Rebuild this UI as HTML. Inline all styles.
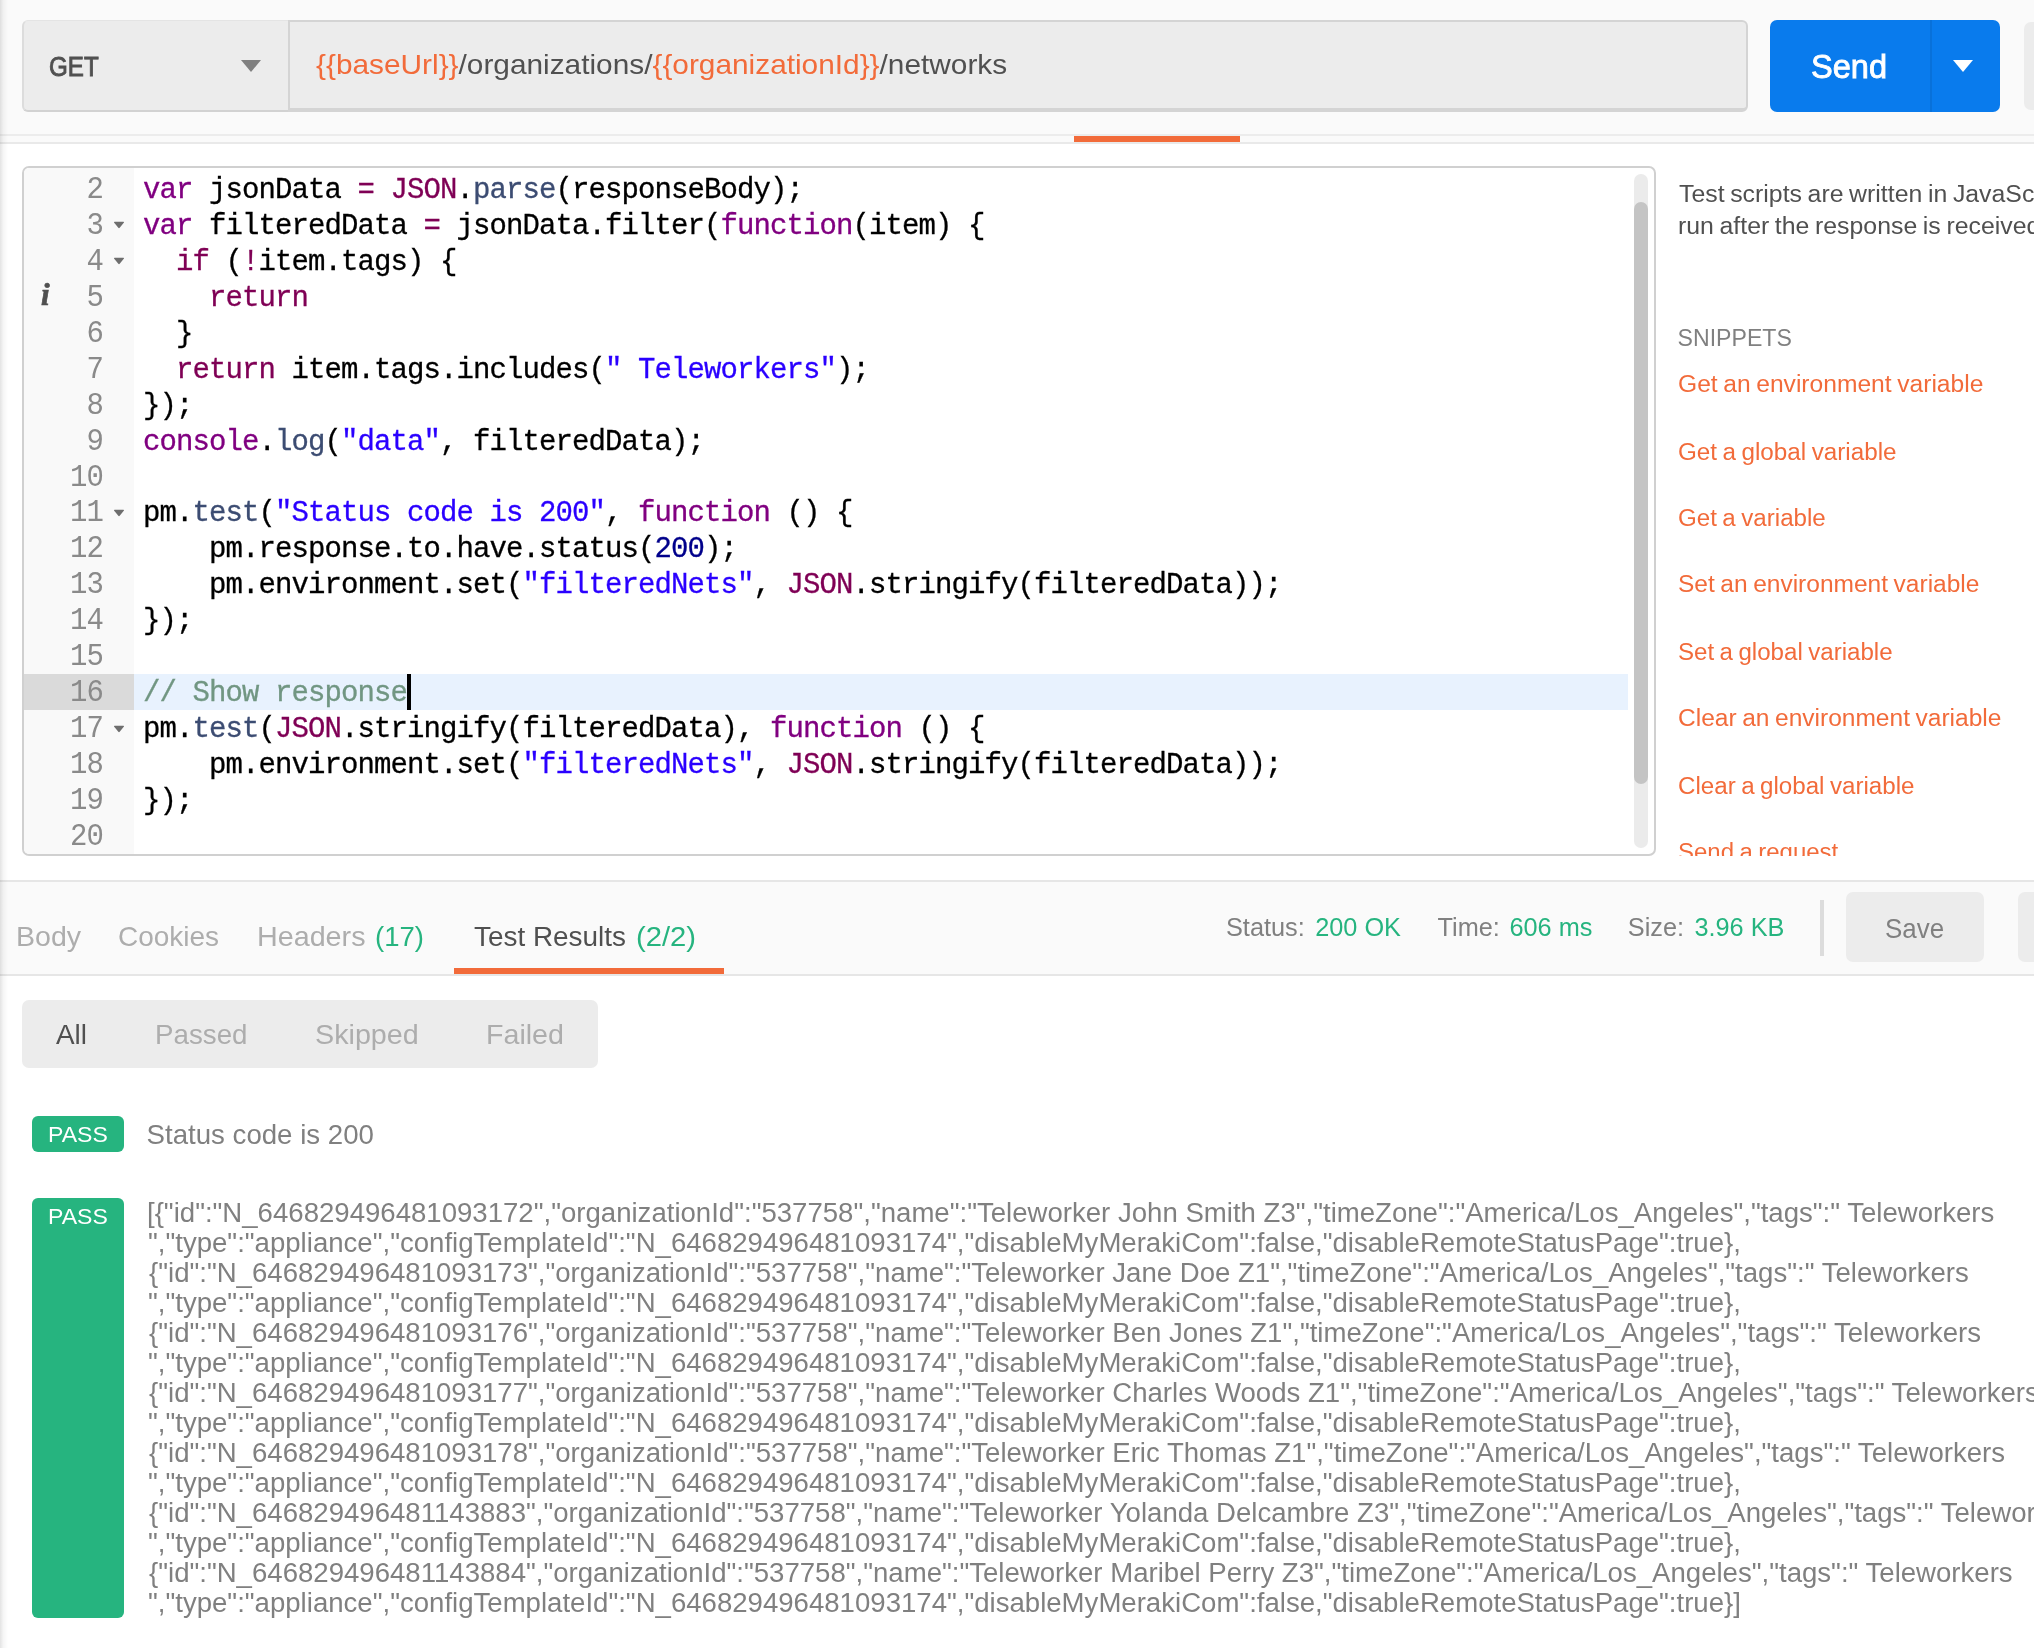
<!DOCTYPE html>
<html>
<head>
<meta charset="utf-8">
<title>Postman</title>
<style>
html,body{margin:0;padding:0;}
body{width:2034px;height:1648px;overflow:hidden;background:#fff;position:relative;font-family:"Liberation Sans",sans-serif;}
#app{position:absolute;left:0;top:0;width:2034px;height:1648px;overflow:hidden;will-change:transform;background:#fff;}
.abs{position:absolute;}
.t{position:absolute;white-space:pre;line-height:1;}
.mono{font-family:"Liberation Mono",monospace;}
#topbg{left:0;top:0;width:2034px;height:143px;background:#fafafa;}
#line1{left:0;top:134px;width:2034px;height:2px;background:#ececec;}
#line2{left:0;top:142px;width:2034px;height:2px;background:#e9e9e9;}
#tabbar{left:1074px;top:136px;width:166px;height:6px;background:#f26b3a;}
#getbox{left:22px;top:20px;width:268px;height:92px;background:#ececec;border-radius:6px 0 0 6px;box-sizing:border-box;border-left:2px solid #dcdcdc;border-bottom:2px solid #d2d2d2;border-top:1px solid #e4e4e4;}
#urlbox{left:288px;top:20px;width:1460px;height:92px;background:#ececec;border-radius:0 6px 6px 0;box-sizing:border-box;border:2px solid #d4d4d4;border-bottom:4px solid #d4d4d4;}
#gettri{left:241px;top:60px;width:0;height:0;border-left:10px solid transparent;border-right:10px solid transparent;border-top:12px solid #808080;}
#sendbtn{left:1770px;top:20px;width:230px;height:92px;background:#097bed;border-radius:7px;}
#senddiv{left:1930px;top:20px;width:2px;height:92px;background:#0871da;}
#sendtri{left:1953px;top:60px;width:0;height:0;border-left:10px solid transparent;border-right:10px solid transparent;border-top:12px solid #fff;}
#morebtn{left:2024px;top:22px;width:30px;height:88px;background:#ececec;border-radius:7px;}
#lshadow{left:0;top:0;width:8px;height:1648px;background:linear-gradient(to right,rgba(0,0,0,0.11),rgba(0,0,0,0.04) 40%,rgba(0,0,0,0) 100%);}
#rpcover{left:1660px;top:856px;width:374px;height:24px;background:#fff;}
#respbg{left:0;top:882px;width:2034px;height:92px;background:#fafafa;}
#respl1{left:0;top:880px;width:2034px;height:2px;background:#e6e6e6;}
#respl2{left:0;top:974px;width:2034px;height:2px;background:#e6e6e6;}
#tabul{left:454px;top:968px;width:270px;height:6px;background:#f26b3a;}
#savebtn{left:1846px;top:892px;width:138px;height:70px;background:#ececec;border-radius:7px;}
#dlbtn{left:2018px;top:892px;width:40px;height:70px;background:#ececec;border-radius:7px;}
#vsep{left:1820px;top:900px;width:4px;height:56px;background:#dcdcdc;}
#filt{left:22px;top:1000px;width:576px;height:68px;background:#ececec;border-radius:7px;}
#pass1{left:32px;top:1116px;width:92px;height:36px;background:#26b47f;border-radius:6px;}
#pass2{left:32px;top:1198px;width:92px;height:420px;background:#26b47f;border-radius:6px;}
.o{color:#f26b3a;}

#edbox{left:22px;top:166px;width:1634px;height:690px;box-sizing:border-box;border:2px solid #d0d0d0;border-radius:7px;background:#fff;}
#gutter{left:24px;top:168px;width:110px;height:686px;background:#f9f9f9;border-radius:5px 0 0 5px;}
#actg{left:24px;width:110px;height:36px;background:#dadada;}
#actl{left:134px;width:1494px;height:36px;background:#e8f2fe;}
#cursor{left:407px;width:4px;height:36px;background:#000;}
#sbtrack{left:1634px;top:174px;width:14px;height:674px;background:#ebebeb;border-radius:7px;}
#sbthumb{left:1634px;top:202px;width:14px;height:582px;background:#c4c4c4;border-radius:7px;}
.ln{right:1931px;font-size:29.0px;color:#8a8a8a;letter-spacing:-0.9028px;transform:scaleY(1.1);transform-origin:100% 76.65%;}
.cl{left:143.0px;font-size:29.0px;color:#000;letter-spacing:-0.9028px;-webkit-text-stroke:0.3px;}
.k{color:#7f0055;} .p{color:#800080;} .f{color:#3c4c72;} .s{color:#2a00ff;} .n{color:#00008b;} .c{color:#719682;}
#info{font-family:"Liberation Serif",serif;font-weight:bold;font-style:italic;font-size:31px;color:#505050;-webkit-text-stroke:0.7px #505050;}
</style>
</head>
<body>
<div id="app">
<div id="topbg" class="abs"></div>
<div id="line1" class="abs"></div>
<div id="line2" class="abs"></div>
<div id="tabbar" class="abs"></div>
<div id="getbox" class="abs"></div>
<div id="urlbox" class="abs"></div>
<div id="gettri" class="abs"></div>
<div id="sendbtn" class="abs"></div>
<div id="senddiv" class="abs"></div>
<div id="sendtri" class="abs"></div>
<div id="morebtn" class="abs"></div>
<div id="edbox" class="abs"></div>
<div id="gutter" class="abs"></div>
<div id="actg" class="abs" style="top:674px"></div>
<div id="actl" class="abs" style="top:674px"></div>
<div id="cursor" class="abs" style="top:674px"></div>
<div id="sbtrack" class="abs"></div><div id="sbthumb" class="abs"></div>
<span class="t mono ln" style="top:175.67px">2</span>
<span class="t mono cl" style="top:175.67px"><span class="p">var</span> jsonData <span class="k">=</span> <span class="k">JSON</span>.<span class="f">parse</span>(responseBody);</span>
<span class="t mono ln" style="top:211.65px">3</span>
<svg class="abs" style="left:113px;top:221px" width="12" height="8" viewBox="0 0 12 8"><path d="M1.6 0.8 H10.4 Q11.4 0.9 10.8 1.8 L6.7 6.8 Q6 7.5 5.3 6.8 L1.2 1.8 Q0.6 0.9 1.6 0.8 Z" fill="#6e6e6e"/></svg>
<span class="t mono cl" style="top:211.65px"><span class="p">var</span> filteredData <span class="k">=</span> jsonData.filter(<span class="p">function</span>(item) {</span>
<span class="t mono ln" style="top:247.63px">4</span>
<svg class="abs" style="left:113px;top:257px" width="12" height="8" viewBox="0 0 12 8"><path d="M1.6 0.8 H10.4 Q11.4 0.9 10.8 1.8 L6.7 6.8 Q6 7.5 5.3 6.8 L1.2 1.8 Q0.6 0.9 1.6 0.8 Z" fill="#6e6e6e"/></svg>
<span class="t mono cl" style="top:247.63px">  <span class="k">if</span> (<span class="k">!</span>item.tags) {</span>
<span class="t mono ln" style="top:283.61px">5</span>
<span class="t mono cl" style="top:283.61px">    <span class="k">return</span></span>
<span class="t mono ln" style="top:319.59px">6</span>
<span class="t mono cl" style="top:319.59px">  }</span>
<span class="t mono ln" style="top:355.57px">7</span>
<span class="t mono cl" style="top:355.57px">  <span class="k">return</span> item.tags.includes(<span class="s">" Teleworkers"</span>);</span>
<span class="t mono ln" style="top:391.55px">8</span>
<span class="t mono cl" style="top:391.55px">});</span>
<span class="t mono ln" style="top:427.53px">9</span>
<span class="t mono cl" style="top:427.53px"><span class="p">console</span>.<span class="f">log</span>(<span class="s">"data"</span>, filteredData);</span>
<span class="t mono ln" style="top:463.51px">10</span>
<span class="t mono ln" style="top:499.49px">11</span>
<svg class="abs" style="left:113px;top:509px" width="12" height="8" viewBox="0 0 12 8"><path d="M1.6 0.8 H10.4 Q11.4 0.9 10.8 1.8 L6.7 6.8 Q6 7.5 5.3 6.8 L1.2 1.8 Q0.6 0.9 1.6 0.8 Z" fill="#6e6e6e"/></svg>
<span class="t mono cl" style="top:499.49px">pm.<span class="f">test</span>(<span class="s">"Status code is 200"</span>, <span class="p">function</span> () {</span>
<span class="t mono ln" style="top:535.47px">12</span>
<span class="t mono cl" style="top:535.47px">    pm.response.to.have.status(<span class="n">200</span>);</span>
<span class="t mono ln" style="top:571.45px">13</span>
<span class="t mono cl" style="top:571.45px">    pm.environment.set(<span class="s">"filteredNets"</span>, <span class="k">JSON</span>.stringify(filteredData));</span>
<span class="t mono ln" style="top:607.43px">14</span>
<span class="t mono cl" style="top:607.43px">});</span>
<span class="t mono ln" style="top:643.41px">15</span>
<span class="t mono ln" style="top:679.39px">16</span>
<span class="t mono cl" style="top:679.39px"><span class="c">// Show response</span></span>
<span class="t mono ln" style="top:715.37px">17</span>
<svg class="abs" style="left:113px;top:725px" width="12" height="8" viewBox="0 0 12 8"><path d="M1.6 0.8 H10.4 Q11.4 0.9 10.8 1.8 L6.7 6.8 Q6 7.5 5.3 6.8 L1.2 1.8 Q0.6 0.9 1.6 0.8 Z" fill="#6e6e6e"/></svg>
<span class="t mono cl" style="top:715.37px">pm.<span class="f">test</span>(<span class="k">JSON</span>.stringify(filteredData), <span class="p">function</span> () {</span>
<span class="t mono ln" style="top:751.35px">18</span>
<span class="t mono cl" style="top:751.35px">    pm.environment.set(<span class="s">"filteredNets"</span>, <span class="k">JSON</span>.stringify(filteredData));</span>
<span class="t mono ln" style="top:787.33px">19</span>
<span class="t mono cl" style="top:787.33px">});</span>
<span class="t mono ln" style="top:823.31px">20</span>
<span id="info" class="t" style="left:41px;top:278.74px">i</span>

<div id="respbg" class="abs"></div>
<div id="respl1" class="abs"></div>
<div id="respl2" class="abs"></div>
<div id="tabul" class="abs"></div>
<div id="savebtn" class="abs"></div>
<div id="dlbtn" class="abs"></div>
<div id="vsep" class="abs"></div>
<div id="filt" class="abs"></div>
<div id="pass1" class="abs"></div>
<div id="pass2" class="abs"></div>
<span id="get" class="t" style="left:49.40px;top:54.20px;font-size:27px;color:#505050;transform:scaleX(0.8946);transform-origin:0 0;-webkit-text-stroke:0.9px #505050;">GET</span>
<span id="url" class="t" style="left:316.00px;top:51.00px;font-size:28px;color:#505050;transform:scaleX(1.0647);transform-origin:0 0;"><span class="o">{{baseUrl}}</span>/organizations/<span class="o">{{organizationId}}</span>/networks</span>
<span id="send" class="t" style="left:1811.00px;top:50.00px;font-size:33px;color:#ffffff;transform:scaleX(0.9867);transform-origin:0 0;-webkit-text-stroke:0.9px #ffffff;">Send</span>
<span id="rp1" class="t" style="left:1678.60px;top:183.20px;font-size:23.5px;color:#505050;transform:scaleX(1.0570);transform-origin:0 0;word-spacing:-1.2px;">Test scripts are written in JavaScript, and are</span>
<span id="rp2" class="t" style="left:1677.60px;top:215.00px;font-size:23.5px;color:#505050;transform:scaleX(1.0570);transform-origin:0 0;word-spacing:-1.2px;">run after the response is received. Learn more</span>
<span id="snip" class="t" style="left:1677.60px;top:327.10px;font-size:23.1px;color:#808080;">SNIPPETS</span>
<span id="sn0" class="t" style="left:1678.40px;top:373.00px;font-size:23.5px;color:#f26b3a;transform:scaleX(1.0472);transform-origin:0 0;word-spacing:-1.2px;">Get an environment variable</span>
<span id="sn1" class="t" style="left:1678.40px;top:440.70px;font-size:23.5px;color:#f26b3a;transform:scaleX(1.0310);transform-origin:0 0;word-spacing:-1.2px;">Get a global variable</span>
<span id="sn2" class="t" style="left:1678.40px;top:506.80px;font-size:23.5px;color:#f26b3a;transform:scaleX(1.0268);transform-origin:0 0;word-spacing:-1.2px;">Get a variable</span>
<span id="sn3" class="t" style="left:1678.40px;top:572.80px;font-size:23.5px;color:#f26b3a;transform:scaleX(1.0429);transform-origin:0 0;word-spacing:-1.2px;">Set an environment variable</span>
<span id="sn4" class="t" style="left:1678.40px;top:640.60px;font-size:23.5px;color:#f26b3a;transform:scaleX(1.0250);transform-origin:0 0;word-spacing:-1.2px;">Set a global variable</span>
<span id="sn5" class="t" style="left:1678.40px;top:706.70px;font-size:23.5px;color:#f26b3a;transform:scaleX(1.0435);transform-origin:0 0;word-spacing:-1.2px;">Clear an environment variable</span>
<span id="sn6" class="t" style="left:1678.40px;top:774.80px;font-size:23.5px;color:#f26b3a;transform:scaleX(1.0271);transform-origin:0 0;word-spacing:-1.2px;">Clear a global variable</span>
<span id="sn7" class="t" style="left:1678.40px;top:841.00px;font-size:23.5px;color:#f26b3a;transform:scaleX(1.0205);transform-origin:0 0;word-spacing:-1.2px;">Send a request</span>
<span id="tb1" class="t" style="left:16.40px;top:922.80px;font-size:27.5px;color:#adadad;transform:scaleX(1.0377);transform-origin:0 0;">Body</span>
<span id="tb2" class="t" style="left:118.00px;top:922.80px;font-size:27.5px;color:#adadad;transform:scaleX(1.0175);transform-origin:0 0;">Cookies</span>
<span id="tb3" class="t" style="left:257.20px;top:922.80px;font-size:27.5px;color:#adadad;transform:scaleX(1.0436);transform-origin:0 0;">Headers</span>
<span id="tb3n" class="t" style="left:375.00px;top:922.80px;font-size:27.5px;color:#26b47f;">(17)</span>
<span id="tb4" class="t" style="left:474.00px;top:922.80px;font-size:27.5px;color:#505050;transform:scaleX(1.0148);transform-origin:0 0;">Test Results</span>
<span id="tb4n" class="t" style="left:636.20px;top:922.80px;font-size:27.5px;color:#26b47f;transform:scaleX(1.0630);transform-origin:0 0;">(2/2)</span>
<span id="st1" class="t" style="left:1226.00px;top:914.60px;font-size:25.3px;color:#808080;">Status:</span>
<span id="st2" class="t" style="left:1315.20px;top:914.60px;font-size:25.3px;color:#26b47f;">200 OK</span>
<span id="st3" class="t" style="left:1437.60px;top:914.60px;font-size:25.3px;color:#808080;">Time:</span>
<span id="st4" class="t" style="left:1509.40px;top:914.60px;font-size:25.3px;color:#26b47f;">606 ms</span>
<span id="st5" class="t" style="left:1627.80px;top:914.60px;font-size:25.3px;color:#808080;">Size:</span>
<span id="st6" class="t" style="left:1694.40px;top:914.60px;font-size:25.3px;color:#26b47f;">3.96 KB</span>
<span id="save" class="t" style="left:1884.80px;top:914.90px;font-size:27.5px;color:#808080;transform:scaleX(0.9427);transform-origin:0 0;">Save</span>
<span id="f1" class="t" style="left:55.60px;top:1020.70px;font-size:27.5px;color:#505050;transform:scaleX(1.0139);transform-origin:0 0;">All</span>
<span id="f2" class="t" style="left:154.60px;top:1020.70px;font-size:27.5px;color:#adadad;transform:scaleX(1.0080);transform-origin:0 0;">Passed</span>
<span id="f3" class="t" style="left:315.20px;top:1020.70px;font-size:27.5px;color:#adadad;transform:scaleX(1.0443);transform-origin:0 0;">Skipped</span>
<span id="f4" class="t" style="left:486.40px;top:1020.70px;font-size:27.5px;color:#adadad;transform:scaleX(1.0409);transform-origin:0 0;">Failed</span>
<span id="p1" class="t" style="left:48.00px;top:1124.00px;font-size:22.5px;color:#ffffff;transform:scaleX(1.0250);transform-origin:0 0;">PASS</span>
<span id="r0" class="t" style="left:146.60px;top:1121.00px;font-size:27.63px;color:#808080;">Status code is 200</span>
<span id="p2" class="t" style="left:48.00px;top:1206.00px;font-size:22.5px;color:#ffffff;transform:scaleX(1.0250);transform-origin:0 0;">PASS</span>
<span id="ra0" class="t" style="left:147.00px;top:1199.00px;font-size:27.59px;color:#808080;">[{"id":"N_646829496481093172","organizationId":"537758","name":"Teleworker John Smith Z3","timeZone":"America/Los_Angeles","tags":" Teleworkers</span>
<span id="rb0" class="t" style="left:148.00px;top:1229.00px;font-size:27.59px;color:#808080;">","type":"appliance","configTemplateId":"N_646829496481093174","disableMyMerakiCom":false,"disableRemoteStatusPage":true},</span>
<span id="ra1" class="t" style="left:149.00px;top:1259.00px;font-size:27.59px;color:#808080;">{"id":"N_646829496481093173","organizationId":"537758","name":"Teleworker Jane Doe Z1","timeZone":"America/Los_Angeles","tags":" Teleworkers</span>
<span id="rb1" class="t" style="left:148.00px;top:1289.00px;font-size:27.59px;color:#808080;">","type":"appliance","configTemplateId":"N_646829496481093174","disableMyMerakiCom":false,"disableRemoteStatusPage":true},</span>
<span id="ra2" class="t" style="left:149.00px;top:1319.00px;font-size:27.59px;color:#808080;">{"id":"N_646829496481093176","organizationId":"537758","name":"Teleworker Ben Jones Z1","timeZone":"America/Los_Angeles","tags":" Teleworkers</span>
<span id="rb2" class="t" style="left:148.00px;top:1349.00px;font-size:27.59px;color:#808080;">","type":"appliance","configTemplateId":"N_646829496481093174","disableMyMerakiCom":false,"disableRemoteStatusPage":true},</span>
<span id="ra3" class="t" style="left:149.00px;top:1379.00px;font-size:27.59px;color:#808080;">{"id":"N_646829496481093177","organizationId":"537758","name":"Teleworker Charles Woods Z1","timeZone":"America/Los_Angeles","tags":" Teleworkers</span>
<span id="rb3" class="t" style="left:148.00px;top:1409.00px;font-size:27.59px;color:#808080;">","type":"appliance","configTemplateId":"N_646829496481093174","disableMyMerakiCom":false,"disableRemoteStatusPage":true},</span>
<span id="ra4" class="t" style="left:149.00px;top:1439.00px;font-size:27.59px;color:#808080;">{"id":"N_646829496481093178","organizationId":"537758","name":"Teleworker Eric Thomas Z1","timeZone":"America/Los_Angeles","tags":" Teleworkers</span>
<span id="rb4" class="t" style="left:148.00px;top:1469.00px;font-size:27.59px;color:#808080;">","type":"appliance","configTemplateId":"N_646829496481093174","disableMyMerakiCom":false,"disableRemoteStatusPage":true},</span>
<span id="ra5" class="t" style="left:149.00px;top:1499.00px;font-size:27.59px;color:#808080;">{"id":"N_646829496481143883","organizationId":"537758","name":"Teleworker Yolanda Delcambre Z3","timeZone":"America/Los_Angeles","tags":" Teleworkers</span>
<span id="rb5" class="t" style="left:148.00px;top:1529.00px;font-size:27.59px;color:#808080;">","type":"appliance","configTemplateId":"N_646829496481093174","disableMyMerakiCom":false,"disableRemoteStatusPage":true},</span>
<span id="ra6" class="t" style="left:149.00px;top:1559.00px;font-size:27.59px;color:#808080;">{"id":"N_646829496481143884","organizationId":"537758","name":"Teleworker Maribel Perry Z3","timeZone":"America/Los_Angeles","tags":" Teleworkers</span>
<span id="rb6" class="t" style="left:148.00px;top:1589.00px;font-size:27.59px;color:#808080;">","type":"appliance","configTemplateId":"N_646829496481093174","disableMyMerakiCom":false,"disableRemoteStatusPage":true}]</span>

<div id="rpcover" class="abs"></div>
<div id="lshadow" class="abs"></div>
</div>
</body>
</html>
